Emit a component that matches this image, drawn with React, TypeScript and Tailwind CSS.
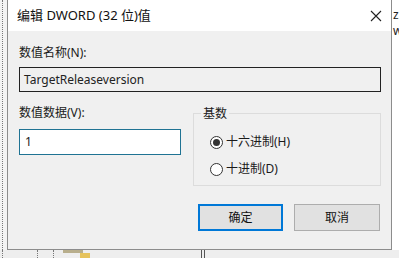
import React from 'react';

const font = { fontFamily: '"Noto Sans", "Noto Sans CJK SC", sans-serif' };

const Radio: React.FC<{ checked?: boolean; label: string }> = ({ checked, label }) => (
  <div className="flex items-center h-4">
    <span className="w-[13px] h-[13px] rounded-full border border-[#333] bg-white flex items-center justify-center">
      {checked && <span className="w-[7px] h-[7px] rounded-full bg-[#333]" />}
    </span>
    <span className="ml-[3px] text-[12px] leading-4 text-[#1a1a1a]">{label}</span>
  </div>
);

const App: React.FC = () => {
  return (
    <div className="w-[399px] h-[258px] bg-[#f4f4f4] flex flex-col overflow-hidden" style={font}>
      <div className="flex h-[250px]">
        {/* left backdrop strip */}
        <div className="w-[7px] h-full bg-[#f3f3f3] relative">
          <div className="absolute left-[2px] top-0 bottom-0 border-l border-dotted border-[#777]" />
        </div>

        {/* dialog */}
        <div className="w-[385px] h-full flex flex-col border-x border-b border-[#8c8c8c] bg-[#f0f0f0]">
          <div className="h-[31px] bg-white flex items-center pl-[9px] pr-[9px]">
            <span className="text-[13px] text-[#111]">编辑 DWORD (32 位)值</span>
            <svg className="ml-auto" width="12" height="12" viewBox="0 0 12 12">
              <path d="M1 1 L11 11 M11 1 L1 11" stroke="#222" strokeWidth="1.1" />
            </svg>
          </div>

          <div className="flex flex-col pl-[11px] pr-[10px]">
            <div className="mt-[14px] text-[12px] leading-4 text-[#1a1a1a]">数值名称(N):</div>
            <div className="mt-[6px] h-[25px] border border-[#222] bg-[#f0f0f0] flex items-center pl-[4px]">
              <span className="text-[12px] text-[#222]">TargetReleaseversion</span>
            </div>

            <div className="flex mt-[13px] gap-[12px]">
              <div className="w-[162px] flex flex-col">
                <div className="text-[12px] leading-4 text-[#1a1a1a]">数值数据(V):</div>
                <div className="mt-[8px] h-[26px] border border-[#1f7393] bg-white flex items-center pl-[5px]">
                  <span className="text-[12px] text-[#222]">1</span>
                </div>
              </div>

              <div className="flex-1 mt-[8px] h-[73px] border border-[#dcdcdc] relative flex flex-col pl-[16px] pt-[20px] gap-[11px]">
                <span className="absolute -top-[8px] left-[7px] px-[2px] bg-[#f0f0f0] text-[12px] leading-4 text-[#1a1a1a]">
                  基数
                </span>
                <Radio checked label="十六进制(H)" />
                <Radio label="十进制(D)" />
              </div>
            </div>

            <div className="flex justify-end gap-[11px] mt-[18px] pr-[1px]">
              <button className="w-[85px] h-[27px] border-2 border-[#0078d7] bg-[#e1e1e1] text-[12px] text-[#111]">
                确定
              </button>
              <button className="w-[86px] h-[27px] border border-[#adadad] bg-[#e1e1e1] text-[12px] text-[#111]">
                取消
              </button>
            </div>
          </div>
        </div>

        {/* right backdrop strip */}
        <div className="w-[7px] h-full bg-white overflow-hidden flex flex-col pl-[1px]">
          <span className="mt-[8px] text-[12px] leading-[14px] text-[#222]">z</span>
          <span className="mt-[2px] text-[12px] leading-[14px] text-[#222]">w</span>
        </div>
      </div>

      {/* bottom backdrop strip */}
      <div className="flex-1 flex bg-[#eeeeee] relative">
        <div className="absolute left-[2px] top-0 bottom-0 border-l border-dotted border-[#777]" />
        <div className="absolute left-[37px] top-0 bottom-0 border-l border-dotted border-[#777]" />
        <div className="absolute left-[53px] top-0 bottom-0 border-l border-dotted border-[#777]" />
        <div className="absolute left-[63px] top-0 w-[20px] h-[3px] bg-[#b8ae8c]" />
        <div className="absolute left-[80px] top-[3px] w-[10px] h-[5px] bg-[#e6c35c]" />
        <div className="absolute left-[201px] top-0 bottom-0 border-l border-[#555]" />
        <div className="absolute left-[204px] top-0 bottom-0 border-l border-[#555]" />
      </div>
    </div>
  );
};

export default App;
